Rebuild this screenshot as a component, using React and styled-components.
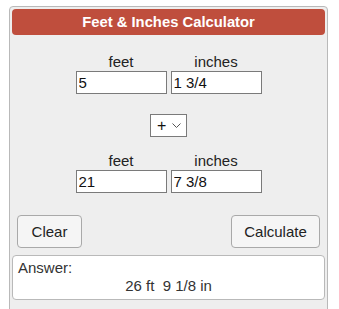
import React, { useState } from 'react';
import styled, { createGlobalStyle } from 'styled-components';

const Global = createGlobalStyle`
  body {
    margin: 0;
    background: #fff;
    font-family: "Liberation Sans", Arial, sans-serif;
  }
`;

const Panel = styled.div`
  margin: 6px 0 0 9px;
  width: 313px;
  height: 320px;
  background: #eeeeee;
  border: 1px solid #b9b9b9;
  border-radius: 4px;
  padding: 2px;
  box-sizing: content-box;
`;

const Header = styled.div`
  height: 26px;
  background: #bf4e3d;
  border-radius: 4px;
  color: #fff;
  font-weight: bold;
  font-size: 14.8px;
  line-height: 26px;
  text-align: center;
`;

const Group = styled.div`
  display: grid;
  grid-template-columns: 91px 91px;
  column-gap: 4px;
  justify-content: center;
  margin-top: ${(p) => p.top}px;
`;

const Label = styled.div`
  text-align: center;
  font-size: 15px;
  line-height: 18px;
  color: #222;
`;

const Field = styled.input`
  box-sizing: border-box;
  width: 91px;
  height: 23px;
  border: 1px solid #7a7a7a;
  background: #fff;
  font-family: "Liberation Sans", Arial, sans-serif;
  font-size: 15px;
  color: #111;
  padding: 0 2px;
  margin: 0;
  outline: none;
`;

const OpRow = styled.div`
  display: flex;
  justify-content: center;
  margin-top: 20px;
`;

const OpWrap = styled.div`
  position: relative;
  width: 37px;
  height: 23px;
`;

const OpSelect = styled.select`
  appearance: none;
  box-sizing: border-box;
  width: 37px;
  height: 23px;
  border: 1px solid #7a7a7a;
  border-radius: 0;
  background: #fff;
  font-family: "Liberation Sans", Arial, sans-serif;
  font-size: 16px;
  color: #111;
  padding: 0 0 0 6px;
  margin: 0;
  outline: none;
`;

const Chevron = styled.svg`
  position: absolute;
  right: 6px;
  top: 9px;
  pointer-events: none;
`;

const Buttons = styled.div`
  display: flex;
  justify-content: space-between;
  padding: 0 5px 0 5px;
  margin-top: 22px;
`;

const Btn = styled.button`
  box-sizing: border-box;
  width: ${(p) => p.w}px;
  height: 33px;
  background: #f5f5f5;
  border: 1px solid #a9a9a9;
  border-radius: 4px;
  font-family: "Liberation Sans", Arial, sans-serif;
  font-size: 15px;
  color: #222;
  padding: 0;
`;

const Answer = styled.div`
  box-sizing: border-box;
  margin-top: 7px;
  width: 100%;
  height: 45px;
  background: #fff;
  border: 1px solid #b9b9b9;
  border-radius: 4px;
  padding: 3px 5px;
  font-size: 15px;
  line-height: 18px;
  color: #333;
`;

const Result = styled.div`
  text-align: center;
  white-space: pre;
`;

export default function App() {
  const [op, setOp] = useState('+');
  return (
    <>
      <Global />
      <Panel>
        <Header>Feet &amp; Inches Calculator</Header>
        <Group top={18}>
          <Label>feet</Label>
          <Label>inches</Label>
          <Field defaultValue="5" />
          <Field defaultValue="1 3/4" />
        </Group>
        <OpRow>
          <OpWrap>
            <OpSelect value={op} onChange={(e) => setOp(e.target.value)}>
              <option>+</option>
              <option>-</option>
            </OpSelect>
            <Chevron width="9" height="5" viewBox="0 0 9 5">
              <path d="M0.5 0.5 L4.5 4.5 L8.5 0.5" fill="none" stroke="#555" strokeWidth="1" />
            </Chevron>
          </OpWrap>
        </OpRow>
        <Group top={15}>
          <Label>feet</Label>
          <Label>inches</Label>
          <Field defaultValue="21" />
          <Field defaultValue="7 3/8" />
        </Group>
        <Buttons>
          <Btn w={65}>Clear</Btn>
          <Btn w={89}>Calculate</Btn>
        </Buttons>
        <Answer>
          Answer:
          <Result>26 ft  9 1/8 in</Result>
        </Answer>
      </Panel>
    </>
  );
}
